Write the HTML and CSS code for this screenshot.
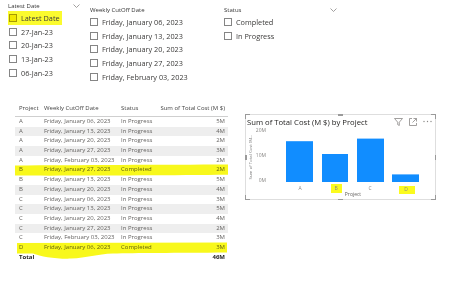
FILE: index.html
```html
<!DOCTYPE html>
<html>
<head>
<meta charset="utf-8">
<link rel="stylesheet" href="styles.css">
</head>
<body>
<div class="top">
  <div class="slicer s1">
    <div class="slicer-head"><span>Latest Date</span><svg class="chev" width="7" height="4" viewBox="0 0 7 4"><polyline points="0.5,0.5 3.5,3.5 6.5,0.5"/></svg></div>
    <ul class="items">
      <li class="item hl"><span class="box"></span>Latest Date</li>
      <li class="item"><span class="box"></span>27-Jan-23</li>
      <li class="item"><span class="box"></span>20-Jan-23</li>
      <li class="item"><span class="box"></span>13-Jan-23</li>
      <li class="item"><span class="box"></span>06-Jan-23</li>
    </ul>
  </div>
  <div class="slicer s2">
    <div class="slicer-head"><span>Weekly CutOff Date</span></div>
    <ul class="items">
      <li class="item"><span class="box"></span>Friday, January 06, 2023</li>
      <li class="item"><span class="box"></span>Friday, January 13, 2023</li>
      <li class="item"><span class="box"></span>Friday, January 20, 2023</li>
      <li class="item"><span class="box"></span>Friday, January 27, 2023</li>
      <li class="item"><span class="box"></span>Friday, February 03, 2023</li>
    </ul>
  </div>
  <div class="slicer s3">
    <div class="slicer-head"><span>Status</span><svg class="chev" width="7" height="4" viewBox="0 0 7 4"><polyline points="0.5,0.5 3.5,3.5 6.5,0.5"/></svg></div>
    <ul class="items">
      <li class="item"><span class="box"></span>Completed</li>
      <li class="item"><span class="box"></span>In Progress</li>
    </ul>
  </div>
</div>
<div class="bottom">
  <div class="table">
    <div class="row thead"><span>Project</span><span>Weekly CutOff Date</span><span>Status</span><span class="num">Sum of Total Cost (M $)</span></div>
    <div class="row"><span>A</span><span>Friday, January 06, 2023</span><span>In Progress</span><span class="num">5M</span></div>
    <div class="row even"><span>A</span><span>Friday, January 13, 2023</span><span>In Progress</span><span class="num">4M</span></div>
    <div class="row"><span>A</span><span>Friday, January 20, 2023</span><span>In Progress</span><span class="num">2M</span></div>
    <div class="row even"><span>A</span><span>Friday, January 27, 2023</span><span>In Progress</span><span class="num">3M</span></div>
    <div class="row"><span>A</span><span>Friday, February 03, 2023</span><span>In Progress</span><span class="num">2M</span></div>
    <div class="row marked"><span>B</span><span>Friday, January 27, 2023</span><span>Completed</span><span class="num">2M</span></div>
    <div class="row"><span>B</span><span>Friday, January 13, 2023</span><span>In Progress</span><span class="num">5M</span></div>
    <div class="row even"><span>B</span><span>Friday, January 20, 2023</span><span>In Progress</span><span class="num">4M</span></div>
    <div class="row"><span>C</span><span>Friday, January 06, 2023</span><span>In Progress</span><span class="num">3M</span></div>
    <div class="row even"><span>C</span><span>Friday, January 13, 2023</span><span>In Progress</span><span class="num">5M</span></div>
    <div class="row"><span>C</span><span>Friday, January 20, 2023</span><span>In Progress</span><span class="num">4M</span></div>
    <div class="row even"><span>C</span><span>Friday, January 27, 2023</span><span>In Progress</span><span class="num">2M</span></div>
    <div class="row"><span>C</span><span>Friday, February 03, 2023</span><span>In Progress</span><span class="num">3M</span></div>
    <div class="row marked"><span>D</span><span>Friday, January 06, 2023</span><span>Completed</span><span class="num">3M</span></div>
    <div class="row total"><span>Total</span><span></span><span></span><span class="num">46M</span></div>
    <svg class="marker" width="213" height="150" viewBox="0 0 213 150">
      <path d="M0,48.6 C60,48.2 150,47.8 213,47.6 L213,57.8 C150,58.4 60,58.8 0,58.6 Z"/>
      <path d="M2,126 L212,125.6 L212,135.6 C160,136 120,136 98,136.6 C82,137.2 72,141 56,141.6 C40,142 26,139.5 18,136.4 L2,136.4 Z"/>
    </svg>
  </div>
  <div class="chart">
    <span class="corner tl"></span><span class="corner tr"></span><span class="corner bl"></span><span class="corner br"></span>
    <span class="handle ht"></span><span class="handle hb"></span><span class="handle hl2"></span><span class="handle hr"></span>
    <div class="chart-head">
      <span class="chart-title">Sum of Total Cost (M $) by Project</span>
      <span class="tools">
        <svg width="9" height="8" viewBox="0 0 9 8"><path d="M0.5,0.5 H8.5 L5.3,4.2 V7.5 L3.7,6.6 V4.2 Z"/></svg>
        <svg width="8" height="8" viewBox="0 0 8 8"><path d="M3,0.5 H0.5 V7.5 H7.5 V5 M4.5,0.5 H7.5 V3.5 M7.5,0.5 L3.5,4.5"/></svg>
        <svg class="dots" width="9" height="3" viewBox="0 0 9 3"><circle cx="1" cy="1.5" r="0.7"/><circle cx="4.5" cy="1.5" r="0.7"/><circle cx="8" cy="1.5" r="0.7"/></svg>
      </span>
    </div>
    <svg class="plot" width="189" height="73" viewBox="0 0 189 73">
      <g class="ylab">
        <text x="20" y="4">20M</text>
        <text x="20" y="29">10M</text>
        <text x="20" y="54">0M</text>
      </g>
      <text class="ytitle" transform="translate(4.5,30) rotate(-90)">Sum of Total Cost (M...</text>
      <g class="bars">
        <rect x="40" y="14.2" width="27" height="40.8"/>
        <rect x="76" y="27" width="26" height="28"/>
        <rect x="111" y="11.6" width="27" height="43.4"/>
        <rect x="146" y="47.4" width="27" height="7.6"/>
      </g>
      <rect class="xhl" x="85" y="57" width="11" height="9"/>
      <rect class="xhl" x="153" y="59" width="16" height="8"/>
      <g class="xlab">
        <text x="54" y="61.5">A</text>
        <text x="90" y="61.5">B</text>
        <text x="124" y="61.5">C</text>
        <text x="160" y="62.5">D</text>
      </g>
      <text class="xtitle" x="107" y="68">Project</text>
    </svg>
  </div>
</div>
</body>
</html>
```

FILE: styles.css
```css
html, body {
  margin: 0;
  padding: 0;
  background: #ffffff;
}
body {
  width: 474px;
  height: 294px;
  overflow: hidden;
  font-family: "Open Sans", "Noto Sans", "Liberation Sans", sans-serif;
  color: #252423;
}
.top {
  display: flex;
  height: 102px;
}
.slicer {
  box-sizing: border-box;
}
.s1 {
  margin-left: 8px;
  width: 72px;
  padding-top: 2px;
}
.s2 {
  margin-left: 10px;
  width: 124px;
  padding-top: 6px;
}
.s3 {
  margin-left: 10px;
  width: 115px;
  padding-top: 6px;
}
.slicer-head {
  display: flex;
  justify-content: space-between;
  align-items: center;
  height: 8px;
  font-size: 6px;
  color: #333333;
  white-space: nowrap;
}
.s3 .slicer-head {
  padding-right: 2px;
}
.chev {
  fill: none;
  stroke: #8a8886;
  stroke-width: 0.8;
}
.items {
  list-style: none;
  margin: 1.2px 0 0;
  padding: 0;
}
.item {
  display: flex;
  align-items: center;
  gap: 4px;
  height: 13.7px;
  width: fit-content;
  padding: 0 2px 0 1px;
  font-size: 7.3px;
  color: #3b3a39;
  white-space: nowrap;
}
.s2 .item,
.s3 .item {
  padding-left: 0;
}
.box {
  width: 6px;
  height: 6px;
  border: 1px solid #858585;
  background: #ffffff;
}
.item.hl {
  background: #fbfb2e;
}
.item.hl .box {
  background: #f2e800;
  border-color: #a89a00;
}
.bottom {
  display: flex;
  align-items: flex-start;
}
.table {
  position: relative;
  margin-left: 15px;
  width: 213px;
  font-size: 6px;
}
.row {
  display: grid;
  grid-template-columns: 25px 77px 37px 67px;
  padding: 0 3px 0 4px;
  height: 9.7px;
  line-height: 9.7px;
  color: #666462;
  white-space: nowrap;
}
.row.thead {
  height: 14px;
  line-height: 13px;
  color: #444444;
  border-bottom: 1px solid #cfcfcf;
}
.row.even {
  background: #eeeeee;
}
.row.marked {
  background: #ffffff;
}
.row.total {
  font-weight: 700;
  color: #252423;
}
.num {
  text-align: right;
}
.marker {
  position: absolute;
  left: 0;
  top: 15px;
  fill: #f8f81c;
  mix-blend-mode: multiply;
}
.chart {
  position: relative;
  box-sizing: border-box;
  margin-left: 17px;
  margin-top: 12px;
  width: 191px;
  height: 86px;
  border: 1px solid #dedede;
}
.chart-head {
  display: flex;
  align-items: center;
  height: 11px;
  padding: 1px 3px 0 1px;
}
.chart-title {
  font-size: 7.7px;
  color: #252423;
  white-space: nowrap;
}
.tools {
  margin-left: auto;
  display: flex;
  align-items: center;
  gap: 6px;
}
.tools svg {
  fill: none;
  stroke: #8a8886;
  stroke-width: 0.8;
}
.tools .dots {
  fill: #8a8886;
  stroke: none;
}
.plot {
  display: block;
  overflow: visible;
}
.plot text {
  font-family: "Open Sans", "Noto Sans", sans-serif;
  fill: #8a8886;
  font-size: 5px;
  dominant-baseline: middle;
}
.ylab text {
  text-anchor: end;
}
.plot .ytitle {
  font-size: 4.3px;
  text-anchor: middle;
  fill: #777777;
}
.xlab text,
.plot .xtitle {
  text-anchor: middle;
}
.plot .xtitle {
  fill: #605e5c;
}
.bars rect {
  fill: #118dff;
}
.xhl {
  fill: #fbfb1e;
}
.corner {
  position: absolute;
  width: 4px;
  height: 4px;
  border-color: #9a9a9a;
  border-style: solid;
  border-width: 0;
}
.corner.tl { left: -1px; top: -1px; border-left-width: 1.5px; border-top-width: 1.5px; }
.corner.tr { right: -1px; top: -1px; border-right-width: 1.5px; border-top-width: 1.5px; }
.corner.bl { left: -1px; bottom: -1px; border-left-width: 1.5px; border-bottom-width: 1.5px; }
.corner.br { right: -1px; bottom: -1px; border-right-width: 1.5px; border-bottom-width: 1.5px; }
.handle {
  position: absolute;
  background: #9a9a9a;
}
.handle.ht { top: -1px; left: 92px; width: 5px; height: 1.5px; }
.handle.hb { bottom: -1px; left: 92px; width: 5px; height: 1.5px; }
.handle.hl2 { left: -1px; top: 40px; width: 1.5px; height: 5px; }
.handle.hr { right: -1px; top: 40px; width: 1.5px; height: 5px; }
```
